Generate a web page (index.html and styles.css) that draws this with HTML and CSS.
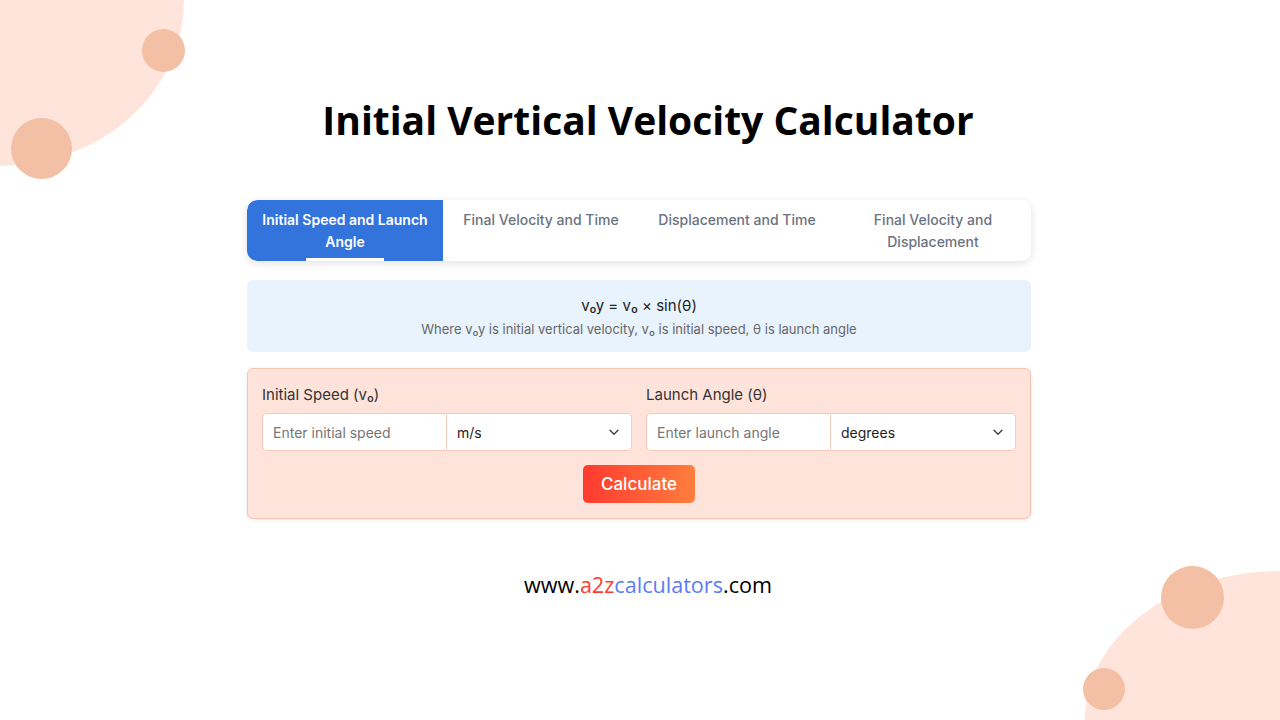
FILE: index.html
```html
<!DOCTYPE html>
<html lang="en">
<head>
<meta charset="utf-8">
<title>Initial Vertical Velocity Calculator</title>
<link rel="stylesheet" href="styles.css">
</head>
<body>
<div class="bg">
  <div class="deco deco-tl"></div>
  <div class="dot dot-tl1"></div>
  <div class="dot dot-tl2"></div>
  <div class="deco deco-br"></div>
  <div class="dot dot-br1"></div>
  <div class="dot dot-br2"></div>
</div>

<main class="page">
  <h1 class="title">Initial Vertical Velocity Calculator</h1>

  <section class="calc">
    <nav class="tabs">
      <button class="tab active">Initial Speed and Launch Angle</button>
      <button class="tab">Final Velocity and Time</button>
      <button class="tab">Displacement and Time</button>
      <button class="tab">Final Velocity and Displacement</button>
    </nav>

    <div class="formula">
      <div class="formula-main">v₀y = v₀ × sin(θ)</div>
      <div class="formula-desc">Where v₀y is initial vertical velocity, v₀ is initial speed, θ is launch angle</div>
    </div>

    <div class="panel">
      <div class="fields">
        <div class="field">
          <label class="label">Initial Speed (v₀)</label>
          <div class="combo">
            <input class="inp" type="text" placeholder="Enter initial speed">
            <div class="sel"><span>m/s</span>
              <svg width="14" height="14" viewBox="0 0 16 16"><path d="M3.5 6l4.5 4.5L12.5 6" fill="none" stroke="#374151" stroke-width="1.6" stroke-linecap="round" stroke-linejoin="round"/></svg>
            </div>
          </div>
        </div>
        <div class="field">
          <label class="label">Launch Angle (θ)</label>
          <div class="combo">
            <input class="inp" type="text" placeholder="Enter launch angle">
            <div class="sel"><span>degrees</span>
              <svg width="14" height="14" viewBox="0 0 16 16"><path d="M3.5 6l4.5 4.5L12.5 6" fill="none" stroke="#374151" stroke-width="1.6" stroke-linecap="round" stroke-linejoin="round"/></svg>
            </div>
          </div>
        </div>
      </div>
      <div class="actions">
        <button class="btn">Calculate</button>
      </div>
    </div>
  </section>

  <footer class="site">www.<span class="red">a2z</span><span class="blue">calculators</span>.com</footer>
</main>
</body>
</html>
```

FILE: styles.css
```css
* { box-sizing: border-box; }
html, body { margin: 0; padding: 0; }
body {
  width: 1280px;
  height: 720px;
  overflow: hidden;
  background: #ffffff;
  position: relative;
  font-family: Inter, "Noto Sans", sans-serif;
}

.bg { position: absolute; left: 0; top: 0; width: 1280px; height: 720px; overflow: hidden; }
.deco { position: absolute; background: #fee4da; border-radius: 50%; }
.deco-tl { left: -184px; top: -166px; width: 368px; height: 332px; }
.deco-br { left: 1085px; top: 571px; width: 390px; height: 298px; }
.dot { position: absolute; background: #f4c0a5; border-radius: 50%; }
.dot-tl1 { left: 142px; top: 29px; width: 43px; height: 43px; }
.dot-tl2 { left: 11px; top: 118px; width: 61px; height: 61px; }
.dot-br1 { left: 1161px; top: 566px; width: 63px; height: 63px; }
.dot-br2 { left: 1083px; top: 668px; width: 42px; height: 42px; }

.page {
  position: relative;
  display: flex;
  flex-direction: column;
  align-items: center;
  padding-top: 94px;
}

.title {
  margin: 0;
  font-family: "Open Sans", sans-serif;
  font-weight: 700;
  font-size: 39px;
  line-height: 52px;
  color: #000;
  padding-left: 16px;
}

.calc {
  width: 784px;
  margin-top: 54px;
  margin-right: 2px;
  display: flex;
  flex-direction: column;
}

.tabs {
  display: grid;
  grid-template-columns: repeat(4, 1fr);
  background: #fff;
  border-radius: 10px;
  box-shadow: 0 2px 8px rgba(0,0,0,0.12);
  height: 61px;
  overflow: hidden;
}
.tab {
  position: relative;
  border: 0;
  background: transparent;
  font-family: Inter, sans-serif;
  font-size: 14px;
  font-weight: 500;
  line-height: 22px;
  color: #6b7280;
  padding: 9px 14px 0;
  display: flex;
  align-items: flex-start;
  justify-content: center;
  text-align: center;
}
.tab.active {
  background: #3373dc;
  color: #fff;
  font-weight: 600;
  border-radius: 10px 0 0 10px;
}
.tab.active::after {
  content: "";
  position: absolute;
  left: 59px;
  width: 78px;
  bottom: 0;
  height: 3px;
  background: #fff;
}

.formula {
  margin-top: 19px;
  background: #e8f3fe;
  border-radius: 6px;
  height: 72px;
  display: flex;
  flex-direction: column;
  align-items: center;
  padding-top: 16px;
}
.formula-main { font-size: 15px; line-height: 20px; color: #222; }
.formula-desc { font-size: 13px; line-height: 20px; color: #666; margin-top: 3px; }

.panel {
  margin-top: 16px;
  background: #fee3db;
  border: 1px solid #f7c4b0;
  border-radius: 6px;
  box-shadow: 0 1px 4px rgba(0,0,0,0.08);
  padding: 15px 14px 14px;
  height: 151px;
}
.fields { display: grid; grid-template-columns: 1fr 1fr; gap: 14px; }
.field { display: flex; flex-direction: column; }
.label { font-size: 15px; line-height: 22px; color: #333; margin-bottom: 7px; }
.combo {
  display: flex;
  height: 38px;
  background: #fff;
  border: 1px solid #f7cbb9;
  border-radius: 5px;
}
.inp {
  width: 184px;
  border: 0;
  border-right: 1px solid #f7cbb9;
  background: transparent;
  padding: 0 10px;
  font-family: Inter, sans-serif;
  font-size: 14px;
  color: #333;
  outline: none;
}
.inp::placeholder { color: #757575; }
.sel {
  flex: 1;
  display: flex;
  align-items: center;
  justify-content: space-between;
  padding: 0 10px 0 10px;
  font-size: 14px;
  color: #222;
}
.actions { display: flex; justify-content: center; margin-top: 14px; }
.btn {
  width: 112px;
  height: 38px;
  border: 0;
  border-radius: 5px;
  background: linear-gradient(90deg, #ff3a30 0%, #ff7e3d 100%);
  color: #fff;
  font-family: Inter, sans-serif;
  font-size: 17px;
  font-weight: 500;
}

.site {
  margin-top: 51px;
  font-family: "Open Sans", sans-serif;
  font-size: 21.6px;
  color: #000;
  padding-left: 16px;
}
.red { color: #ff3b30; }
.blue { color: #5b7cf7; }
```
